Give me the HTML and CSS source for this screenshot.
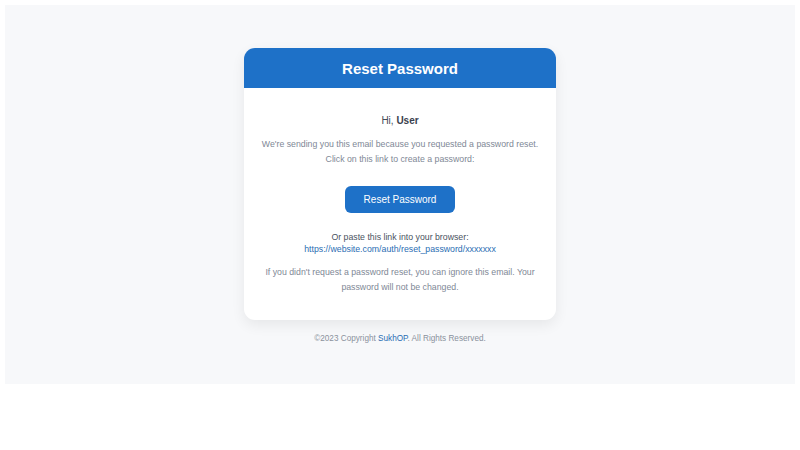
FILE: index.html
```html
<!DOCTYPE html>
<html lang="en">
<head>
<meta charset="utf-8">
<title>Reset Password</title>
<link rel="stylesheet" href="styles.css">
</head>
<body>
<div class="wrapper">
  <div class="card">
    <div class="card-header">Reset Password</div>
    <div class="card-body">
      <p class="greeting">Hi, <strong>User</strong></p>
      <p class="muted">We're sending you this email because you requested a password reset.<br>Click on this link to create a password:</p>
      <a class="button" href="#">Reset Password</a>
      <p class="paste">Or paste this link into your browser:<br><a class="link" href="#">https://website.com/auth/reset_password/xxxxxxx</a></p>
      <p class="muted">If you didn't request a password reset, you can ignore this email. Your password will not be changed.</p>
    </div>
  </div>
  <p class="footer">©2023 Copyright <a class="link" href="#">SukhOP</a>. All Rights Reserved.</p>
</div>
</body>
</html>
```
FILE: styles.css
```css
html, body {
  margin: 0;
  padding: 0;
  background: #ffffff;
}
body {
  padding: 5px;
  font-family: "Liberation Sans", Arial, sans-serif;
}
.wrapper {
  background: #f7f8fa;
  padding: 43px 0 39px;
  display: flex;
  flex-direction: column;
  align-items: center;
}
.card {
  width: 312px;
  background: #ffffff;
  border-radius: 11px;
  overflow: hidden;
  box-shadow: 0 5px 14px rgba(0, 0, 0, 0.07);
}
.card-header {
  background: #1e71c8;
  color: #ffffff;
  height: 40px;
  display: flex;
  align-items: center;
  justify-content: center;
  font-size: 15px;
  font-weight: bold;
}
.card-body {
  padding: 25px 15px 25.5px;
  display: flex;
  flex-direction: column;
  align-items: center;
  text-align: center;
}
.card-body p {
  margin: 0;
}
.greeting {
  font-size: 10px;
  line-height: 16px;
  color: #454c58;
}
.greeting strong {
  color: #3a414d;
}
.muted {
  font-size: 8.75px;
  line-height: 15px;
  color: #808896;
  margin-top: 7.5px !important;
}
.button {
  margin-top: 19.5px;
  width: 110px;
  height: 27px;
  border-radius: 6px;
  background: #1e71c8;
  color: #ffffff;
  font-size: 10px;
  display: flex;
  align-items: center;
  justify-content: center;
  text-decoration: none;
}
.paste {
  margin-top: 18px !important;
  font-size: 8.75px;
  line-height: 12px;
  color: #4a5361;
}
.paste + .muted {
  margin-top: 9.5px !important;
}
.link {
  color: #2a6db3;
  text-decoration: none;
}
.footer {
  margin: 13px 0 0;
  font-size: 8.2px;
  line-height: 12px;
  color: #8a919c;
}
```
